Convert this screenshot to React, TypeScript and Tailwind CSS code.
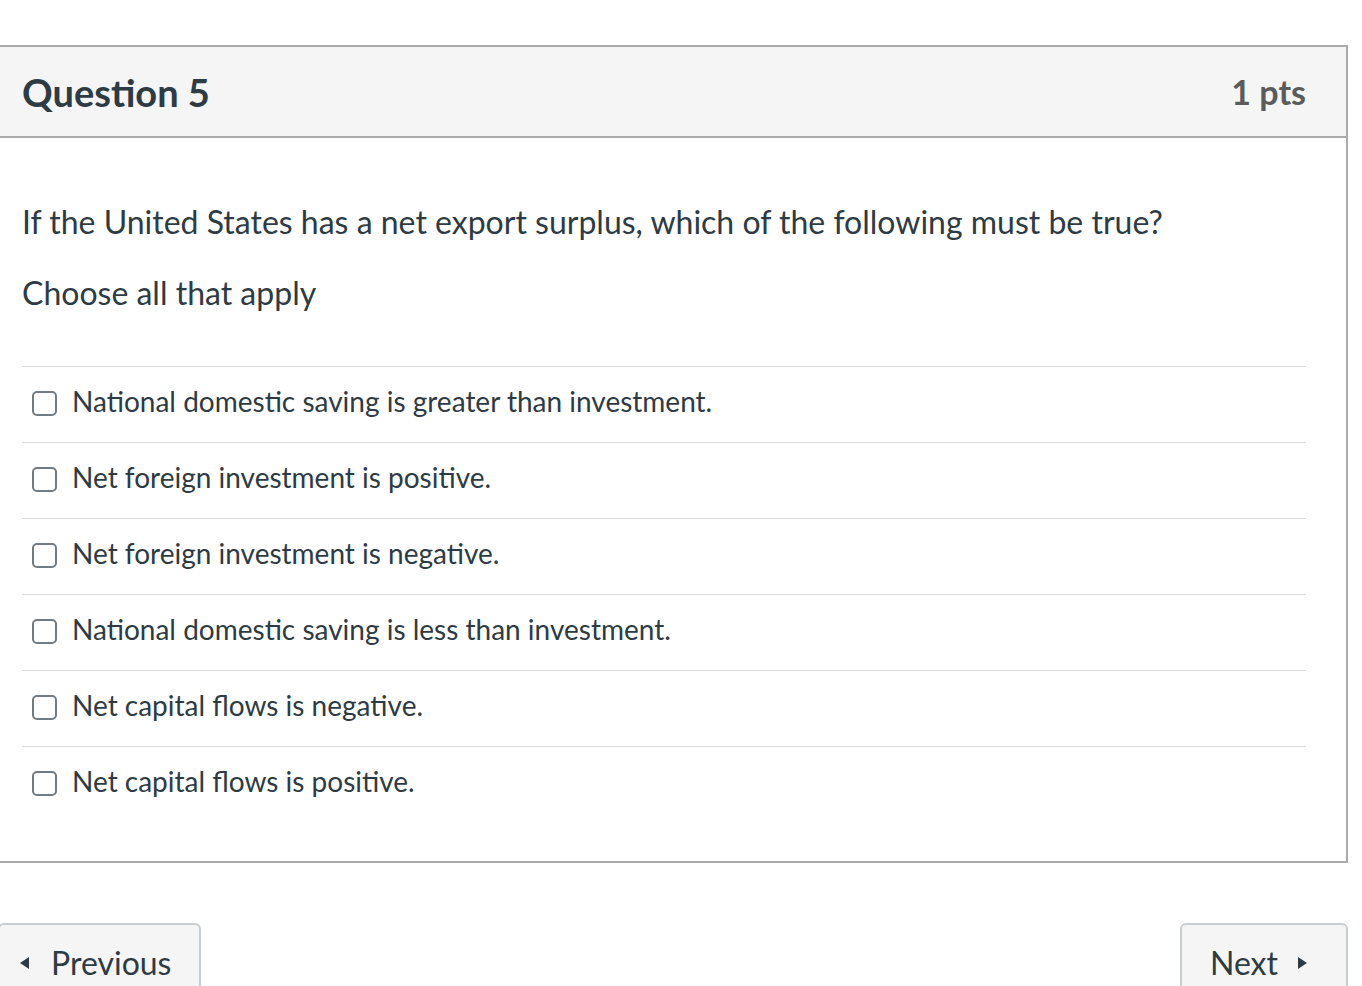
import { Fragment } from 'react';

const answers = [
  'National domestic saving is greater than investment.',
  'Net foreign investment is positive.',
  'Net foreign investment is negative.',
  'National domestic saving is less than investment.',
  'Net capital flows is negative.',
  'Net capital flows is positive.',
];

function Triangle({ dir }: { dir: 'left' | 'right' }) {
  return (
    <svg width="9" height="12" viewBox="0 0 9 12" className="fill-[#2d3b45]">
      {dir === 'left' ? <path d="M9 0 L0 6 L9 12 Z" /> : <path d="M0 0 L9 6 L0 12 Z" />}
    </svg>
  );
}

export default function App() {
  return (
    <div className="min-h-[986px] w-[1362px] overflow-hidden bg-white text-[#2d3b45] [font-family:Lato,'Liberation_Sans',sans-serif]">
      <div className="pt-[45px]">
        {/* Question card */}
        <div className="-ml-[2px] w-[1350px] border-2 border-[#aaaaaa]">
          <div className="flex h-[91px] items-center justify-between border-b-2 border-[#aaaaaa] bg-[#f5f5f5] pl-[22px] pr-[40px]">
            <h2 className="text-[38px] font-bold leading-none">Question 5</h2>
            <span className="text-[34px] font-bold leading-none text-[#5b5b5b]">1 pts</span>
          </div>

          <div className="pb-[39px] pl-[22px] pr-[40px] pt-[61px]">
            <p className="text-[32px] leading-[45px]">
              If the United States has a net export surplus, which of the following must be true?
            </p>
            <p className="mt-[26px] text-[32px] leading-[45px]">Choose all that apply</p>

            <div className="mt-[51px]">
              {answers.map((a) => (
                <Fragment key={a}>
                  <label className="flex h-[76px] items-center border-t border-[#dddddd] pb-[3px] pl-[10px]">
                    <span className="h-[25px] w-[25px] shrink-0 rounded-[5px] border-2 border-[#737b82] bg-white" />
                    <span className="mb-[5px] ml-[15px] text-[28px] leading-none">{a}</span>
                  </label>
                </Fragment>
              ))}
            </div>
          </div>
        </div>

        {/* Nav buttons */}
        <div className="mt-[60px] flex justify-between">
          <button className="-ml-[2px] flex h-[80px] items-center gap-[22px] rounded-[6px] border-2 border-[#c7cdd1] bg-[#f5f5f5] pl-[20px] pr-[28px] text-[32px] text-[#2d3b45]">
            <Triangle dir="left" />
            <span>Previous</span>
          </button>
          <button className="mr-[14px] flex h-[80px] items-center gap-[20px] rounded-[6px] border-2 border-[#c7cdd1] bg-[#f5f5f5] pl-[28px] pr-[39px] text-[32px] text-[#2d3b45]">
            <span>Next</span>
            <Triangle dir="right" />
          </button>
        </div>
      </div>
    </div>
  );
}
